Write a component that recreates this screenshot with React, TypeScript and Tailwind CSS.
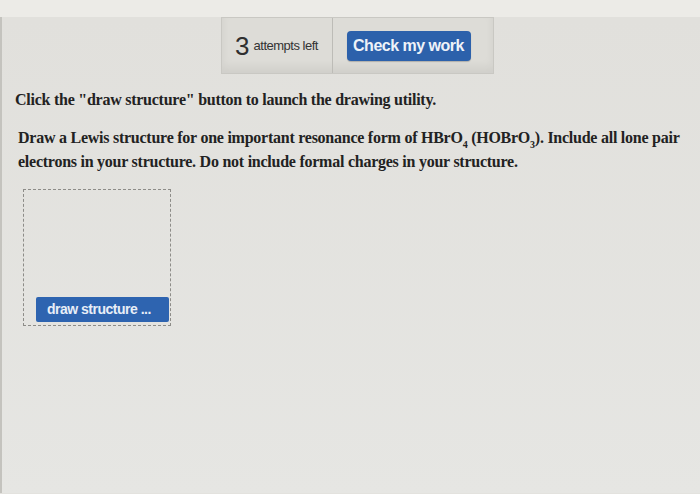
import React from "react";

const serif = { fontFamily: '"Liberation Serif", "Times New Roman", serif' };
const sans = { fontFamily: '"Liberation Sans", Arial, sans-serif' };

const Toolbar = () => (
  <div className="flex justify-center">
    <div className="ml-[12px] flex h-[57px] border border-[#c9c8c3] bg-[#dddcd7] shadow-[inset_0_-6px_8px_rgba(0,0,0,0.06)]">
      <div className="flex w-[111px] items-center justify-center gap-[5px] border-r border-[#bdbcb7]" style={sans}>
        <span className="text-[26px] leading-none tracking-[-1px] text-[#2f2f2f]">3</span>
        <span className="text-[13px] tracking-[-0.5px] text-[#333]">attempts left</span>
      </div>
      <div className="flex w-[160px] items-center pl-[14px]">
        <button
          className="h-[30px] w-[124px] rounded-[4px] bg-[#2c61ab] text-[16px] font-bold tracking-[-0.5px] text-[#eef2f8] shadow-[0_1px_1px_rgba(0,0,0,0.2)]"
          style={sans}
        >
          Check my work
        </button>
      </div>
    </div>
  </div>
);

const DrawArea = () => (
  <div className="ml-[21px] mt-[15px] flex h-[137px] w-[148px] items-end border border-dashed border-[#8d8c88] pb-[3px] pl-[12px]">
    <button
      className="h-[25px] w-[133px] rounded-[2px] bg-[#2e64b0] pl-[11px] text-left text-[14px] font-bold tracking-[-0.5px] text-[#e8eef7]"
      style={sans}
    >
      draw structure ...
    </button>
  </div>
);

export default function App() {
  return (
    <div className="h-[494px] w-[700px] overflow-hidden bg-[#e3e2de]">
      <div className="h-[18px] border-b border-[#cfcec9] bg-[#ecebe7]" />
      <div className="h-[476px] border-l-2 border-[#c4c3be] bg-gradient-to-b from-[#e1e0dc] to-[#e6e6e3]">
        <div className="-mt-[1px]">
          <Toolbar />
        </div>
        <div className="pl-[13px] pr-[10px] text-[#222]" style={serif}>
          <p className="mt-[15px] text-[16px] font-bold leading-[22px] tracking-[-0.25px]">
            Click the "draw structure" button to launch the drawing utility.
          </p>
          <p className="mt-[15px] pl-[3px] text-[16px] font-bold leading-[24px] tracking-[-0.25px]">
            Draw a Lewis structure for one important resonance form of HBrO
            <sub className="align-[-2px] text-[10px] leading-none">4</sub> (HOBrO
            <sub className="align-[-2px] text-[10px] leading-none">3</sub>). Include all lone pair electrons in your
            structure. Do not include formal charges in your structure.
          </p>
        </div>
        <DrawArea />
      </div>
    </div>
  );
}
